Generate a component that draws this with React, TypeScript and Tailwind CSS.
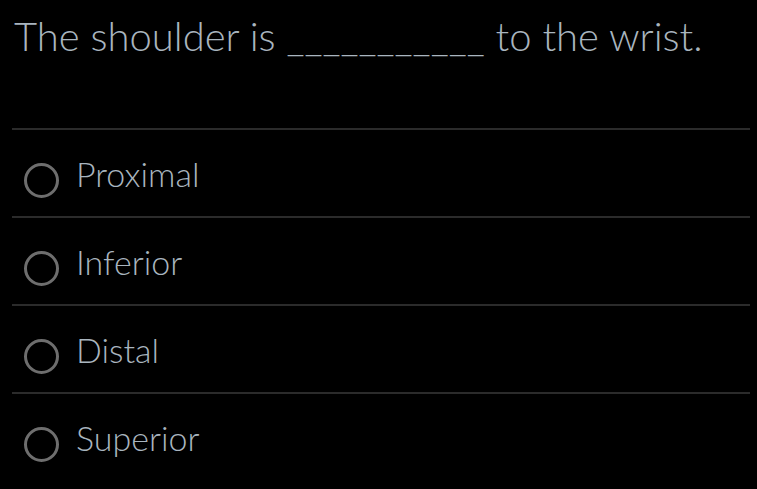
import React from 'react';

const options = ['Proximal', 'Inferior', 'Distal', 'Superior'];

const App: React.FC = () => {
  return (
    <div
      className="min-h-screen w-[757px] h-[489px] overflow-hidden bg-black text-[#a9b5bf]"
      style={{ fontFamily: 'Lato, "Liberation Sans", sans-serif' }}
    >
      {/* Question */}
      <div className="pl-[14px] pt-[12px] h-[128px] text-[40px] font-light leading-[48px]">
        The shoulder is ___________ to the wrist.
      </div>

      {/* Answers */}
      <div className="ml-[12px] mr-[7px]">
        {options.map((opt) => (
          <div key={opt} className="border-t-2 border-[#2b2b2b] h-[88px] flex items-start gap-[17px] pl-[12px]">
            <span className="mt-[33px] w-[35px] h-[35px] rounded-full border-[3px] border-[#6e6e6e] shrink-0" />
            <span className="mt-[27px] text-[34px] font-light leading-none">{opt}</span>
          </div>
        ))}
      </div>
    </div>
  );
};

export default App;
